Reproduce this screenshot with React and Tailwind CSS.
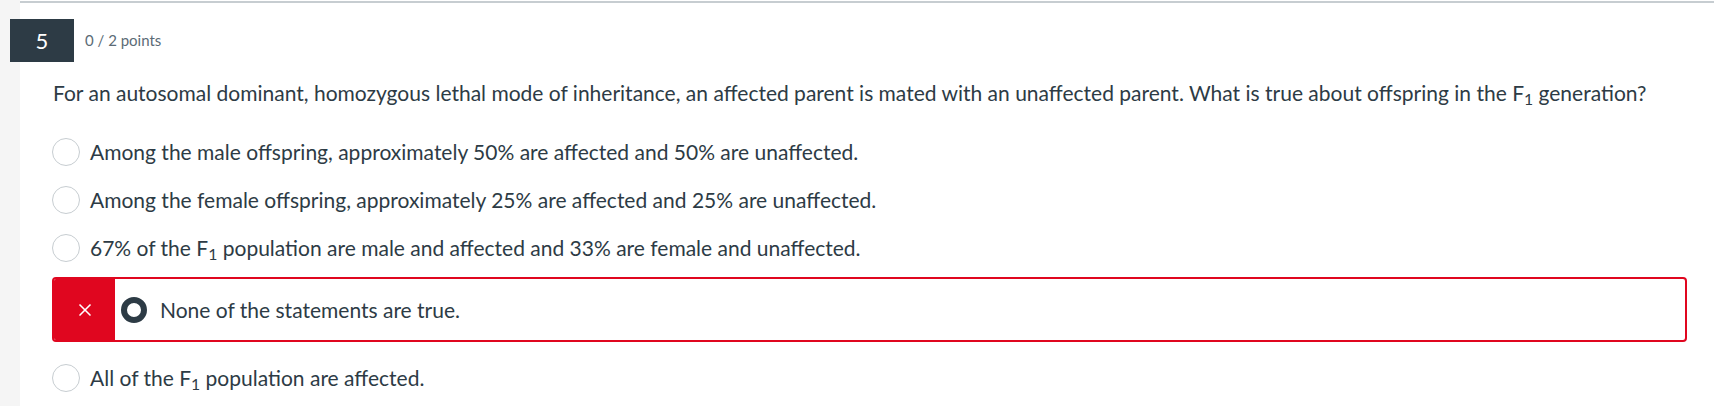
import { X } from "lucide-react";

const Sub1 = () => <sub className="text-[0.75em] leading-none">1</sub>;

const options = [
  { id: "a", text: <>Among the male offspring, approximately 50% are affected and 50% are unaffected.</> },
  { id: "b", text: <>Among the female offspring, approximately 25% are affected and 25% are unaffected.</> },
  { id: "c", text: <>67% of the F<Sub1 /> population are male and affected and 33% are female and unaffected.</> },
  { id: "d", text: <>None of the statements are true.</>, picked: true, wrong: true },
  { id: "e", text: <>All of the F<Sub1 /> population are affected.</> },
];

const Radio = () => (
  <span className="w-[28px] h-[28px] shrink-0 rounded-full border border-[#c7cdd1] bg-white" />
);

export default function App() {
  return (
    <div className="w-[1714px] h-[406px] flex bg-white text-[#2d3b45] font-['Lato',sans-serif] overflow-hidden">
      {/* left gutter */}
      <div className="w-[20px] shrink-0 bg-[#f5f5f5]" />

      <div className="flex-1 border-t-2 border-[#c7cdd1] mt-[1px]">
        {/* header */}
        <div className="flex items-center mt-[16px] -ml-[10px]">
          <div className="w-[64px] h-[43px] bg-[#2d3b45] text-white text-[22px] flex items-center justify-center">
            5
          </div>
          <span className="ml-[11px] text-[15px] text-[#5b6b76]">0 / 2 points</span>
        </div>

        {/* question */}
        <p className="ml-[33px] mt-[18px] text-[21px] leading-[26px]">
          For an autosomal dominant, homozygous lethal mode of inheritance, an affected parent is mated with an
          unaffected parent. What is true about offspring in the F<Sub1 /> generation?
        </p>

        {/* answers */}
        <div className="mt-[22px] mr-[27px] flex flex-col">
          {options.map((o) =>
            o.wrong ? (
              <div key={o.id} className="mt-[5px] mb-[12px] ml-[32px] flex h-[65px] rounded-[4px] border-2 border-[#e0061f] overflow-hidden">
                <div className="w-[61px] bg-[#e0061f] flex items-center justify-center text-white">
                  <X size={20} strokeWidth={2} />
                </div>
                <div className="flex items-center gap-[13px] pl-[6px]">
                  <span className="w-[26px] h-[26px] rounded-full border-[6px] border-[#2d3b45] bg-white" />
                  <span className="text-[21px]">{o.text}</span>
                </div>
              </div>
            ) : (
              <div key={o.id} className="ml-[32px] h-[48px] flex items-center gap-[10px]">
                <Radio />
                <span className="text-[21px]">{o.text}</span>
              </div>
            )
          )}
        </div>
      </div>
    </div>
  );
}
